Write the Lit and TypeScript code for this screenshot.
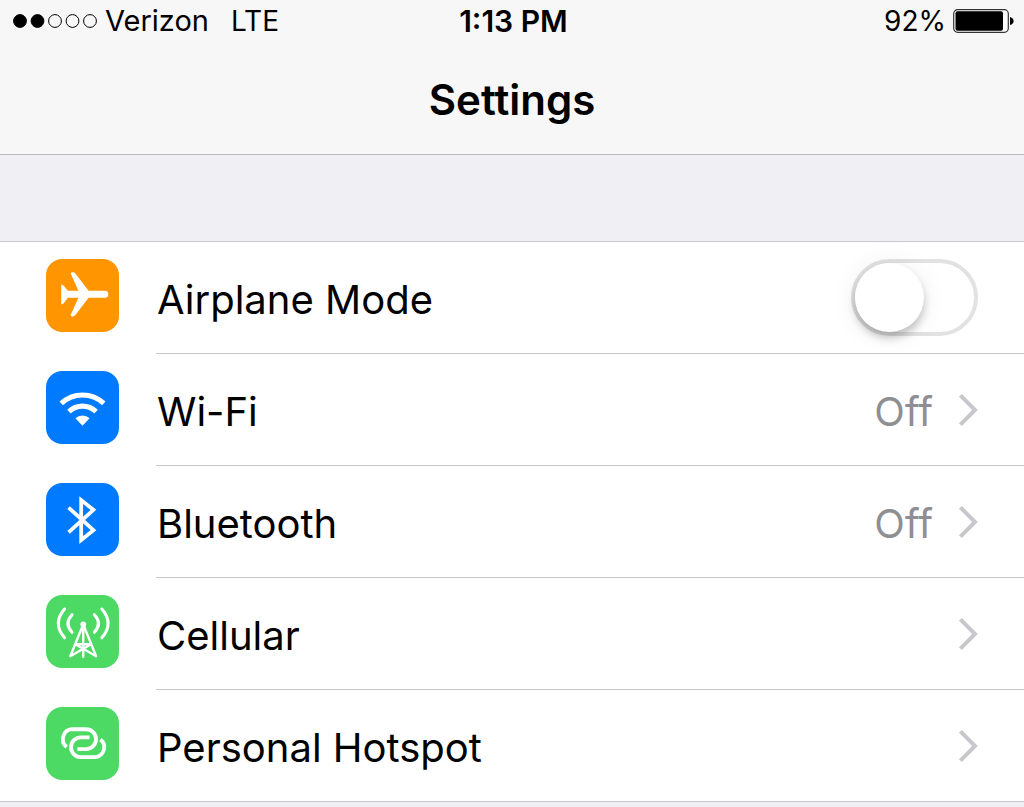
import { LitElement, html, css, svg, nothing } from "lit";
import { customElement, property, state } from "lit/decorators.js";

const glyphs = {
  airplane: svg`<path fill="#fff" d="M15 25.4Q16.6 25 17.5 26.4L21.5 31.3H32L24.3 14.3Q24.6 12.8 26.4 13Q28 13 29 14.4L42 31.3H58A3.5 3.5 0 0 1 58 38.3H42L29 55.2Q28 56.6 26.4 56.6Q24.6 56.8 24.3 55.3L32 38.3H21.5L17.5 43.6Q16.6 45 15 44.6Z"/>`,
  wifi: svg`<g fill="none" stroke="#fff" stroke-width="5">
      <path d="M15 32A30.5 30.5 0 0 1 57 32"/>
      <path d="M22.6 40A19.5 19.5 0 0 1 49.4 40"/>
    </g>
    <path fill="#fff" d="M29 46.6A10.5 10.5 0 0 1 43 46.6L36 54Z"/>`,
  bluetooth: svg`<path fill="none" stroke="#fff" stroke-width="3.7" d="M22.2 24.2L46.8 46.5L34.7 56.2V16.8L46.8 26.5L22.2 48.8"/>`,
  cellular: svg`<g fill="none" stroke="#fff" stroke-linecap="round">
      <path stroke-width="3" d="M18.3 13.8Q6 28 18.3 42.2M55.1 13.8Q67.4 28 55.1 42.2M25.7 19.4Q17.6 28 25.7 36.8M47.7 19.4Q55.8 28 47.7 36.8"/>
      <path stroke-width="2.4" d="M36.7 29L24 60.4M36.7 29L49.4 60.4M36.7 29V61M29 48.6H44.4M29 48.6L49 60.2M44.4 48.6L24.4 60.2"/>
    </g>
    <circle cx="36.7" cy="29" r="2.8" fill="#fff"/>`,
  hotspot: svg`<g fill="none" stroke="#fff" stroke-width="3.8">
      <path d="M20.4 39.4A9.8 9.8 0 0 1 25.5 21.9H39.5A9.8 9.8 0 0 1 39.5 41.5H31"/>
      <path d="M53.6 32A9.8 9.8 0 0 1 48.5 49.5H34.5A9.8 9.8 0 0 1 34.5 29.9H43"/>
    </g>`,
};

type GlyphName = keyof typeof glyphs;

@customElement("status-bar")
export class StatusBar extends LitElement {
  static styles = css`
    :host {
      display: grid;
      grid-template-columns: 1fr auto 1fr;
      align-items: center;
      height: 42px;
      padding: 0 10px 0 13px;
      font-size: 29px;
      line-height: 42px;
      white-space: nowrap;
    }
    .side {
      display: flex;
      align-items: center;
    }
    .end {
      justify-content: flex-end;
      gap: 7px;
    }
    .dots {
      width: 84px;
      height: 14px;
      margin-right: 8px;
    }
    .network {
      margin-left: 22px;
      font-size: 28px;
    }
    .time {
      font-size: 30px;
      font-weight: 600;
    }
    .percent {
      font-size: 28px;
    }
    .battery {
      width: 61px;
      height: 24px;
    }
  `;

  render() {
    return html`
      <div class="side">
        <svg class="dots" viewBox="0 0 84 14" role="img" aria-label="Signal: 2 of 5">
          ${[0, 1, 2, 3, 4].map(
            (i) => svg`<circle cx=${7 + i * 17.5} cy="7" r="6.4" stroke="#000" fill=${i < 2 ? "#000" : "none"}/>`
          )}
        </svg>
        <span>Verizon</span>
        <span class="network">LTE</span>
      </div>
      <time class="time">1:13 PM</time>
      <div class="side end">
        <span class="percent">92%</span>
        <svg class="battery" viewBox="0 0 61 24" aria-hidden="true">
          <rect x=".7" y=".7" width="54.6" height="22.6" rx="4" fill="#fff" stroke="#333" stroke-width="1.2"/>
          <rect x="2.5" y="2.3" width="47.5" height="19.4" rx="2"/>
          <path d="M57 8Q60.6 9 60.6 12T57 16Z"/>
        </svg>
      </div>
    `;
  }
}

@customElement("settings-row")
export class SettingsRow extends LitElement {
  @property() label = "";
  @property() value = "";
  @property() glyph: GlyphName = "wifi";
  @property() tint = "#007aff";
  @property({ type: Boolean }) toggle = false;
  @property({ type: Boolean }) last = false;
  @state() private on = false;

  static styles = css`
    :host {
      display: block;
    }
    .row {
      display: flex;
      padding-left: 46px;
      color: #000;
      text-decoration: none;
      font-size: 40px;
      line-height: 50px;
    }
    .icon {
      flex: none;
      width: 73px;
      height: 73px;
      margin: 17px 37px 0 0;
    }
    .body {
      flex: 1;
      display: flex;
      align-items: center;
      box-sizing: border-box;
      height: 112px;
      padding: 4px 46px 0 0;
      border-bottom: 1px solid #c8c7cc;
    }
    .last {
      border-bottom-color: transparent;
    }
    .label {
      flex: 1;
      padding-left: 1px;
    }
    .value {
      color: #8e8e93;
      margin-right: 25px;
    }
    .chevron {
      width: 20px;
      height: 34px;
      margin-bottom: 4px;
    }
    .switch {
      appearance: none;
      box-sizing: border-box;
      width: 127px;
      height: 77px;
      margin: 0 0 4px;
      border: 4px solid #e2e2e3;
      border-radius: 39px;
      background: #fff;
    }
    .switch::before {
      content: "";
      display: block;
      width: 69px;
      height: 69px;
      border-radius: 50%;
      background: #fff;
      box-shadow: 0 6px 8px rgba(0, 0, 0, 0.22), 0 2px 28px rgba(0, 0, 0, 0.07);
    }
    .switch:checked {
      background: #4cd964;
      border-color: #4cd964;
    }
    .switch:checked::before {
      margin-left: 50px;
    }
  `;

  private icon() {
    return html`<svg class="icon" viewBox="0 0 72 72" aria-hidden="true">
      <rect width="72" height="72" rx="16" fill=${this.tint} />
      ${glyphs[this.glyph]}
    </svg>`;
  }

  render() {
    if (this.toggle) {
      return html`<div class="row">
        ${this.icon()}
        <div class="body">
          <label class="label" for="switch">${this.label}</label>
          <input
            class="switch"
            id="switch"
            type="checkbox"
            role="switch"
            .checked=${this.on}
            @change=${(e: Event) => (this.on = (e.target as HTMLInputElement).checked)}
          />
        </div>
      </div>`;
    }
    return html`<a class="row" href="#">
      ${this.icon()}
      <span class="body ${this.last ? "last" : ""}">
        <span class="label">${this.label}</span>
        ${this.value ? html`<span class="value">${this.value}</span>` : nothing}
        <svg class="chevron" viewBox="0 0 20 34" aria-hidden="true">
          <path d="M2.4 2.4L17 17L2.4 31.6" fill="none" stroke="#c7c7cc" stroke-width="4" />
        </svg>
      </span>
    </a>`;
  }
}

@customElement("app-root")
export class AppRoot extends LitElement {
  static styles = css`
    :host {
      display: block;
      min-height: 100vh;
      background: #efeff4;
      color: #000;
      font-family: Inter, "Liberation Sans", sans-serif;
    }
    .header {
      background: #f7f7f7;
      border-bottom: 1px solid #b9b9bd;
    }
    .title {
      margin: 0;
      padding: 32px 0 28px;
      font-size: 42px;
      line-height: 52px;
      font-weight: 600;
      text-align: center;
    }
    .group {
      margin-top: 86px;
      background: #fff;
      border: solid #c8c7cc;
      border-width: 1px 0;
    }
    .group settings-row:last-child {
      margin-bottom: -1px;
    }
  `;

  render() {
    return html`
      <header class="header">
        <status-bar></status-bar>
        <h1 class="title">Settings</h1>
      </header>
      <main class="group">
        <settings-row label="Airplane Mode" glyph="airplane" tint="#ff9500" toggle></settings-row>
        <settings-row label="Wi-Fi" value="Off" glyph="wifi"></settings-row>
        <settings-row label="Bluetooth" value="Off" glyph="bluetooth"></settings-row>
        <settings-row label="Cellular" glyph="cellular" tint="#4cd964"></settings-row>
        <settings-row label="Personal Hotspot" glyph="hotspot" tint="#4cd964" last></settings-row>
      </main>
    `;
  }
}
